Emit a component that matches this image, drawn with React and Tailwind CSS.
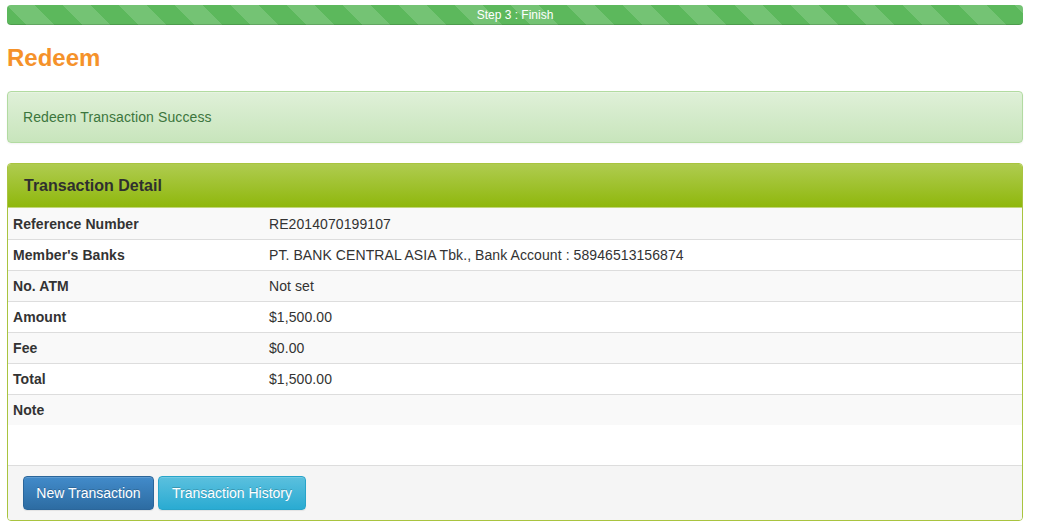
import React from "react";

const rows = [
  ["Reference Number", "RE2014070199107"],
  ["Member's Banks", "PT. BANK CENTRAL ASIA Tbk., Bank Account : 58946513156874"],
  ["No. ATM", "Not set"],
  ["Amount", "$1,500.00"],
  ["Fee", "$0.00"],
  ["Total", "$1,500.00"],
  ["Note", ""],
];

export default function App() {
  return (
    <div className="min-h-[530px] bg-white font-['Liberation_Sans',Arial,sans-serif] text-[14px] leading-[20px] text-[#333]">
      <div className="ml-[7px] w-[1016px] pt-[5px]">
        <div className="h-[20px] overflow-hidden rounded-[4px] bg-[#5cb85c] bg-[linear-gradient(45deg,rgba(255,255,255,.15)_25%,transparent_25%,transparent_50%,rgba(255,255,255,.15)_50%,rgba(255,255,255,.15)_75%,transparent_75%,transparent)] bg-size-[56px_56px] text-center text-[12px] leading-[20px] text-white shadow-[inset_0_-1px_0_rgba(0,0,0,0.15)]">
          Step 3 : Finish
        </div>

        <h3 className="mt-[20px] mb-[20px] text-[24px] font-bold leading-[26px] text-[#f5922a]">
          Redeem
        </h3>

        <div className="rounded-[4px] border border-[#b2dba1] bg-[linear-gradient(to_bottom,#dff0d8,#c8e5bc)] p-[15px] tracking-[0.1px] text-[#3c763d] shadow-[inset_0_1px_0_rgba(255,255,255,0.25),0_1px_2px_rgba(0,0,0,0.05)]">
          Redeem Transaction Success
        </div>

        <div className="mt-[20px] overflow-hidden rounded-[4px] border border-[#a9c43f] bg-white">
          <div className="flex h-[43px] items-center bg-[linear-gradient(to_bottom,#afcc50,#8fb70c)] px-[16px] text-[16px] font-bold text-[#2f2f2f]">
            Transaction Detail
          </div>
          <div className="border-t border-[#c2d67a] tracking-[0.08px]">
            {rows.map(([label, value], i) => (
              <div
                key={label}
                className={
                  "grid h-[31px] grid-cols-[256px_1fr] items-center " +
                  (i > 0 ? "border-t border-[#dddddd] " : "h-[30px] ") +
                  (i % 2 === 0 ? "bg-[#f9f9f9]" : "bg-white")
                }
              >
                <div className="px-[5px] font-bold">{label}</div>
                <div className="px-[5px]">{value}</div>
              </div>
            ))}
          </div>
          <div className="h-[40px]" />
          <div className="flex gap-[4px] border-t border-[#dddddd] bg-[#f5f5f5] px-[15px] py-[10px]">
            <button className="h-[34px] w-[131px] rounded-[4px] border border-[#2b669a] bg-[linear-gradient(to_bottom,#428bca,#2d6ca2)] text-[14px] text-white [text-shadow:0_-1px_0_rgba(0,0,0,0.2)] shadow-[inset_0_1px_0_rgba(255,255,255,0.15),0_1px_1px_rgba(0,0,0,0.075)]">
              New Transaction
            </button>
            <button className="h-[34px] w-[148px] rounded-[4px] border border-[#28a4c9] bg-[linear-gradient(to_bottom,#5bc0de,#2aabd2)] text-[14px] text-white [text-shadow:0_-1px_0_rgba(0,0,0,0.2)] shadow-[inset_0_1px_0_rgba(255,255,255,0.15),0_1px_1px_rgba(0,0,0,0.075)]">
              Transaction History
            </button>
          </div>
        </div>
      </div>
    </div>
  );
}
